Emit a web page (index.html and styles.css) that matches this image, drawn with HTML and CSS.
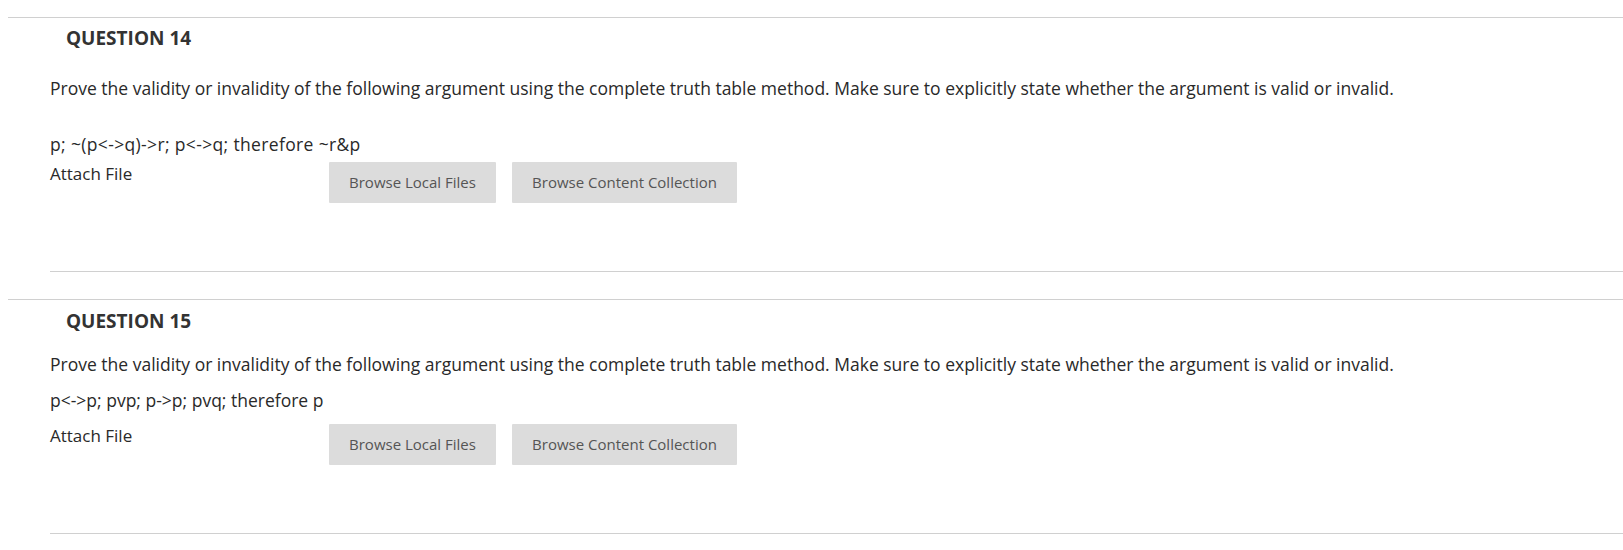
FILE: index.html
```html
<!DOCTYPE html>
<html lang="en">
<head>
<meta charset="utf-8">
<title>Questions</title>
<link rel="stylesheet" href="styles.css">
</head>
<body>
<div class="page">
  <section class="question q14">
    <h3 class="q-title">QUESTION 14</h3>
    <div class="q-body">
      <p class="prompt">Prove the validity or invalidity of the following argument using the complete truth table method. Make sure to explicitly state whether the argument is valid or invalid.</p>
      <p class="argument">p; ~(p&lt;-&gt;q)-&gt;r; p&lt;-&gt;q; therefore ~r&amp;p</p>
      <div class="attach">
        <span class="attach-label">Attach File</span>
        <div class="attach-buttons">
          <button class="btn btn-local" type="button">Browse Local Files</button>
          <button class="btn btn-content" type="button">Browse Content Collection</button>
        </div>
      </div>
    </div>
  </section>
  <section class="question q15">
    <h3 class="q-title">QUESTION 15</h3>
    <div class="q-body">
      <p class="prompt">Prove the validity or invalidity of the following argument using the complete truth table method. Make sure to explicitly state whether the argument is valid or invalid.</p>
      <p class="argument">p&lt;-&gt;p; pvp; p-&gt;p; pvq; therefore p</p>
      <div class="attach">
        <span class="attach-label">Attach File</span>
        <div class="attach-buttons">
          <button class="btn btn-local" type="button">Browse Local Files</button>
          <button class="btn btn-content" type="button">Browse Content Collection</button>
        </div>
      </div>
    </div>
  </section>
</div>
</body>
</html>
```
FILE: styles.css
```css
html, body {
  margin: 0;
  padding: 0;
  background: #ffffff;
}

body {
  font-family: "Open Sans", "Noto Sans", Arial, sans-serif;
  color: #292929;
  overflow: hidden;
}

.page {
  padding-top: 17px;
}

.question {
  margin-left: 8px;
  border-top: 1px solid #d0d0d0;
}

.q15 {
  margin-top: 27px;
}

.q-title {
  margin: 6px 0 0 0;
  padding-left: 58px;
  font-size: 19px;
  line-height: 28px;
  font-weight: 700;
  color: #333333;
}

.q15 .q-title {
  margin-top: 7px;
}

.q-body {
  margin-left: 42px;
  padding-bottom: 68px;
  border-bottom: 1px solid #d0d0d0;
}

.prompt,
.argument {
  margin: 0;
  font-size: 17.5px;
  line-height: 24px;
}

.q14 .prompt { margin-top: 24px; }
.q14 .argument { margin-top: 32px; letter-spacing: 0.35px; }
.q15 .prompt { margin-top: 17px; }
.q15 .argument { margin-top: 12px; }

.attach {
  display: flex;
  align-items: flex-start;
}

.q14 .attach { margin-top: 6px; }
.q15 .attach { margin-top: 12px; }

.attach-label {
  width: 279px;
  flex: none;
  font-size: 17px;
  line-height: 24px;
}

.attach-buttons {
  display: flex;
  gap: 16px;
}

.btn {
  height: 41px;
  padding: 0;
  border: none;
  border-radius: 1px;
  background: #dcdcdc;
  color: #555555;
  font-family: "Open Sans", "Noto Sans", Arial, sans-serif;
  font-size: 15px;
  line-height: 41px;
  text-align: center;
}

.btn-local { width: 167px; }
.btn-content { width: 225px; }
```
